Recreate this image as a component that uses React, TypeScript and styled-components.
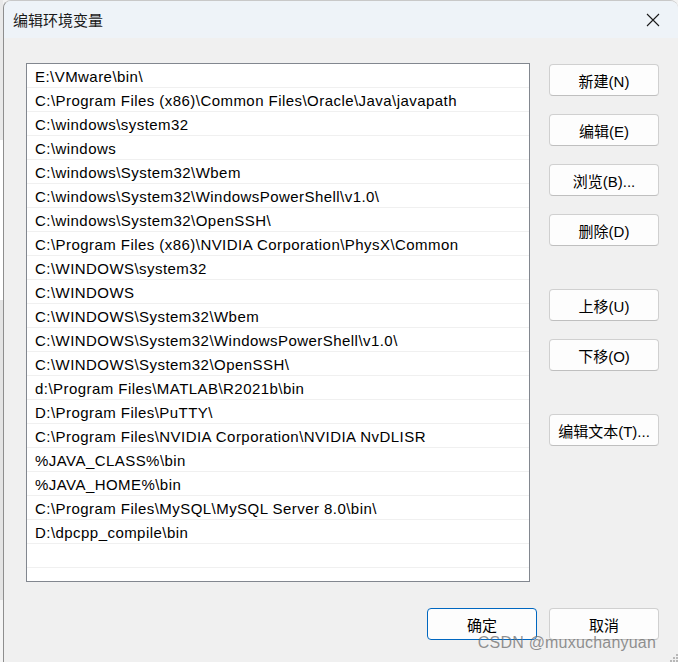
import styled, { createGlobalStyle } from 'styled-components';

const paths = [
  'E:\\VMware\\bin\\',
  'C:\\Program Files (x86)\\Common Files\\Oracle\\Java\\javapath',
  'C:\\windows\\system32',
  'C:\\windows',
  'C:\\windows\\System32\\Wbem',
  'C:\\windows\\System32\\WindowsPowerShell\\v1.0\\',
  'C:\\windows\\System32\\OpenSSH\\',
  'C:\\Program Files (x86)\\NVIDIA Corporation\\PhysX\\Common',
  'C:\\WINDOWS\\system32',
  'C:\\WINDOWS',
  'C:\\WINDOWS\\System32\\Wbem',
  'C:\\WINDOWS\\System32\\WindowsPowerShell\\v1.0\\',
  'C:\\WINDOWS\\System32\\OpenSSH\\',
  'd:\\Program Files\\MATLAB\\R2021b\\bin',
  'D:\\Program Files\\PuTTY\\',
  'C:\\Program Files\\NVIDIA Corporation\\NVIDIA NvDLISR',
  '%JAVA_CLASS%\\bin',
  '%JAVA_HOME%\\bin',
  'C:\\Program Files\\MySQL\\MySQL Server 8.0\\bin\\',
  'D:\\dpcpp_compile\\bin',
  '',
  '',
];

const sideButtons = [
  { label: '新建(N)', gap: 0 },
  { label: '编辑(E)', gap: 18 },
  { label: '浏览(B)...', gap: 18 },
  { label: '删除(D)', gap: 18 },
  { label: '上移(U)', gap: 43 },
  { label: '下移(O)', gap: 18 },
  { label: '编辑文本(T)...', gap: 43 },
];

const App = () => {
  return (
    <>
      <GlobalStyle />
      <StyledDesktop>
        <StyledBehind />
        <StyledWindow>
          <StyledTitleBar>
            <StyledTitle>编辑环境变量</StyledTitle>
            <StyledClose aria-label="close">
              <svg width="14" height="14" viewBox="0 0 14 14">
                <path d="M1 1L13 13M13 1L1 13" stroke="#1a1a1a" strokeWidth="1.1" />
              </svg>
            </StyledClose>
          </StyledTitleBar>

          <StyledBody>
            <StyledMain>
              <StyledList>
                {paths.map((p, i) => (
                  <StyledRow key={i}>{p}</StyledRow>
                ))}
              </StyledList>

              <StyledSide>
                {sideButtons.map((b) => (
                  <StyledButton key={b.label} $gap={b.gap}>
                    {b.label}
                  </StyledButton>
                ))}
              </StyledSide>
            </StyledMain>

            <StyledFooter>
              <StyledButton $primary>确定</StyledButton>
              <StyledButton>取消</StyledButton>
            </StyledFooter>
          </StyledBody>

          <StyledWatermark>CSDN @muxuchanyuan</StyledWatermark>
          <StyledGrip width="8" height="8" viewBox="0 0 8 8">
            <rect x="6" y="0" width="2" height="2" fill="#b8b8b8" />
            <rect x="3" y="3" width="2" height="2" fill="#b8b8b8" />
            <rect x="6" y="3" width="2" height="2" fill="#b8b8b8" />
            <rect x="0" y="6" width="2" height="2" fill="#b8b8b8" />
            <rect x="3" y="6" width="2" height="2" fill="#b8b8b8" />
            <rect x="6" y="6" width="2" height="2" fill="#b8b8b8" />
          </StyledGrip>
        </StyledWindow>
      </StyledDesktop>
    </>
  );
};

/**
 * styles
 */
const GlobalStyle = createGlobalStyle`
  html, body {
    margin: 0;
    padding: 0;
    background: #f3f3f3;
  }

  body {
    font-family: "Liberation Sans", "Noto Sans CJK SC", sans-serif;
    font-size: 15px;
    color: #000;
  }
`;

const StyledDesktop = styled.div`
  display: flex;
  width: 678px;
  height: 662px;
  overflow: hidden;
`;

const StyledBehind = styled.div`
  width: 3px;
  flex-shrink: 0;
  background: linear-gradient(
    to bottom,
    #e9e9e9 0 140px,
    #ffffff 140px 300px,
    #e4e4e4 300px 600px,
    #f5f5f5 600px
  );
`;

const StyledWindow = styled.div`
  position: relative;
  flex: 1;
  display: flex;
  flex-direction: column;
  background: #f0f0f0;
  border-left: 1px solid #8e8e8e;
  border-top: 1px solid #c8c8c8;
  border-radius: 8px 8px 0 0;
  overflow: hidden;
`;

const StyledTitleBar = styled.div`
  height: 37px;
  display: flex;
  align-items: center;
  justify-content: space-between;
  padding-left: 9px;
  background: #eef3f8;
  box-sizing: border-box;
`;

const StyledTitle = styled.div`
  font-size: 15px;
  color: #1a1a1a;
  margin-top: -1px;
`;

const StyledClose = styled.div`
  width: 46px;
  height: 37px;
  display: flex;
  align-items: center;
  justify-content: center;
  margin-right: 2px;
`;

const StyledBody = styled.div`
  flex: 1;
  display: flex;
  flex-direction: column;
  padding: 25px 19px 0 22px;
`;

const StyledMain = styled.div`
  display: grid;
  grid-template-columns: 504px 110px;
  column-gap: 19px;
`;

const StyledList = styled.div`
  height: 519px;
  box-sizing: border-box;
  border: 1px solid #82878f;
  background: #fff;
  overflow: hidden;
`;

const StyledRow = styled.div`
  height: 24px;
  box-sizing: border-box;
  border-bottom: 1px solid #f0f0f0;
  padding: 2px 8px 0;
  line-height: 22px;
  letter-spacing: 0.45px;
  white-space: nowrap;
`;

const StyledSide = styled.div`
  display: flex;
  flex-direction: column;
  padding-top: 1px;
`;

const StyledButton = styled.button<{ $gap?: number; $primary?: boolean }>`
  width: 110px;
  height: 32px;
  margin-top: ${({ $gap }) => $gap || 0}px;
  box-sizing: border-box;
  border: 1px solid ${({ $primary }) => ($primary ? '#0067c0' : '#d0d0d0')};
  border-bottom-color: ${({ $primary }) => ($primary ? '#0067c0' : '#bfbfbf')};
  border-radius: 4px;
  background: #fdfdfd;
  font-family: inherit;
  font-size: 15px;
  color: #000;
  padding: 0;
`;

const StyledFooter = styled.div`
  display: flex;
  justify-content: flex-end;
  gap: 12px;
  margin-top: 26px;
`;

const StyledWatermark = styled.div`
  position: absolute;
  right: 22px;
  bottom: 10px;
  font-family: "Liberation Sans", sans-serif;
  font-size: 16px;
  color: rgba(110, 110, 110, 0.75);
  letter-spacing: 0.2px;
`;

const StyledGrip = styled.svg`
  position: absolute;
  right: 0;
  bottom: 0;
`;

export default App;
